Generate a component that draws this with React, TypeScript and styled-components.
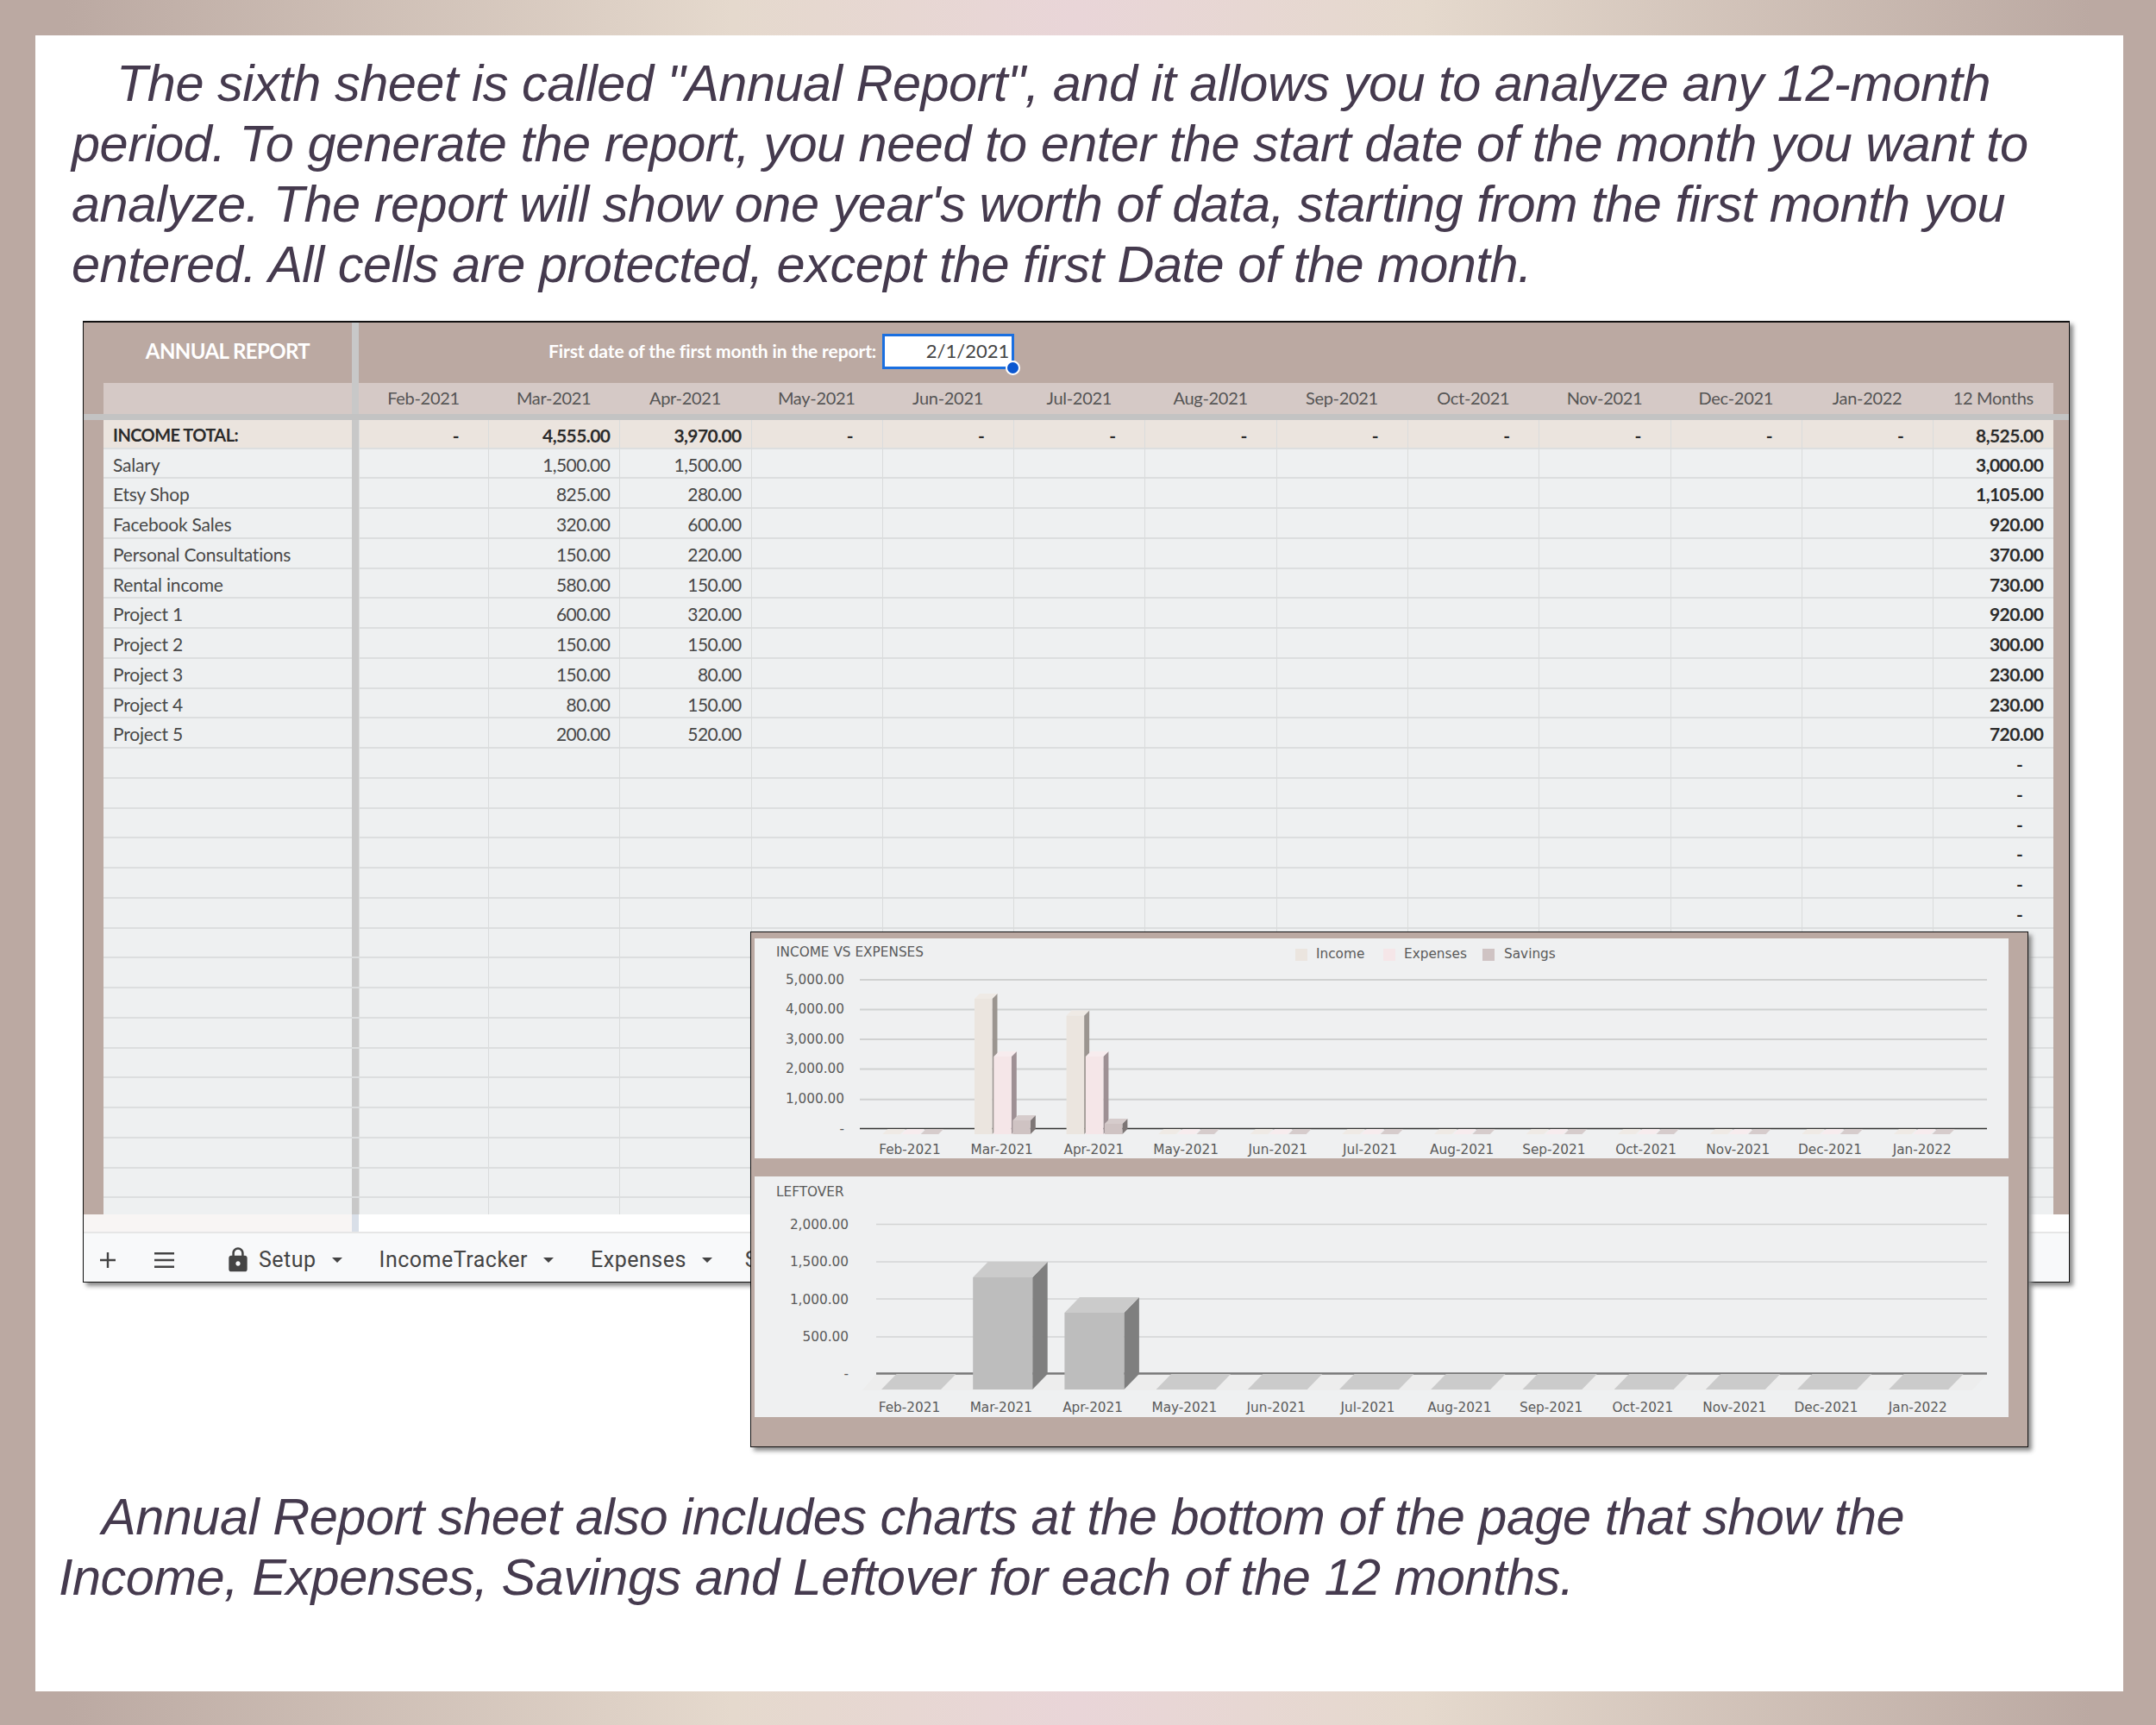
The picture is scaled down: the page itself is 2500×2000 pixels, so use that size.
import React from 'react'
import styled, { createGlobalStyle } from 'styled-components'

const GlobalStyle = createGlobalStyle`
  html, body {
    margin: 0;
    padding: 0;
    background: #bba9a2;
  }
`

const ROSE = '#bba9a2'
const SHEET_FONT = '"Lato", "Liberation Sans", sans-serif'
const CHART_FONT = '"DejaVu Sans", "Liberation Sans", sans-serif'

const Page = styled.div`
  box-sizing: border-box;
  width: 2500px;
  height: 2000px;
  padding: 41px 38px 39px 41px;
  background-color: ${ROSE};
  background-image:
    linear-gradient(90deg, #bba9a2 3%, #e5d9cd 34%, #e9d5d8 50%, #e5d9cd 66%, #bba9a2 97%),
    linear-gradient(90deg, #bba9a2 3%, #e5d9cd 34%, #e9d5d8 50%, #e5d9cd 66%, #bba9a2 97%);
  background-size: 100% 41px, 100% 39px;
  background-position: top, bottom;
  background-repeat: no-repeat;
`

const Card = styled.div`
  box-sizing: border-box;
  height: 100%;
  background: #fff;
  padding-top: 21px;
`

const Paragraph = styled.p<{ $left: number; $indent: number }>`
  margin: 0 0 0 ${(p) => p.$left}px;
  font-family: "Liberation Sans", Arial, sans-serif;
  font-style: italic;
  font-size: 59.5px;
  line-height: 70px;
  letter-spacing: -0.5px;
  color: #453a4e;
  white-space: nowrap;
  text-indent: ${(p) => p.$indent}px;
`

const SheetArea = styled.div`
  position: relative;
  margin: 30px 0 46px 55px;
  height: 1306px;
`

const Sheet = styled.div`
  box-sizing: border-box;
  width: 2304px;
  height: 1115px;
  border: 1px solid #111;
  border-top-width: 2px;
  background: ${ROSE};
  box-shadow: 4px 4px 5px #8b8b8b;
  font-family: ${SHEET_FONT};
`

const Banner = styled.div`
  display: flex;
  height: 70px;
  padding-left: 23px;
`

const BannerTitle = styled.div`
  width: 288px;
  line-height: 66px;
  text-align: center;
  font-size: 24px;
  font-weight: 700;
  letter-spacing: -0.6px;
  color: #fff;
`

const ColumnRule = styled.div`
  width: 8px;
  background: #c8c8c8;
`

const BannerField = styled.div`
  display: flex;
  align-items: center;
  height: 66px;
  margin-left: 220px;
`

const BannerLabel = styled.div`
  font-size: 21px;
  font-weight: 700;
  letter-spacing: -0.1px;
  line-height: 64px;
  color: #fff;
  margin-right: 7px;
`

const DateCell = styled.div`
  position: relative;
  box-sizing: border-box;
  width: 153px;
  height: 41px;
  padding-right: 3px;
  border: 3px solid #1a6fe0;
  background: #fff;
  text-align: right;
  line-height: 34px;
  font-size: 22px;
  color: #454545;
`

const DragHandle = styled.span`
  position: absolute;
  right: -10px;
  bottom: -10px;
  width: 13px;
  height: 13px;
  border: 2px solid #fff;
  border-radius: 50%;
  background: #0b57d0;
`

const gridColumns = '288px 8px 150px repeat(11, 152.3px) 140px'

const HeaderRow = styled.div`
  display: grid;
  grid-template-columns: ${gridColumns};
  height: 36px;
  margin: 0 18px 0 23px;
  background: #d5c9c6;
`

const HeaderCell = styled.div`
  line-height: 35px;
  text-align: center;
  font-size: 20px;
  letter-spacing: -0.3px;
  color: #555;
`

const ThickRule = styled.div`
  height: 7px;
  background: #c3c3c3;
`

const Body = styled.div`
  margin: 0 18px 0 23px;
`

const Row = styled.div<{ $total?: boolean; $short?: boolean }>`
  display: grid;
  grid-template-columns: ${gridColumns};
  box-sizing: border-box;
  height: ${(p) => (p.$short ? '19px' : p.$total ? '33.5px' : '34.75px')};
  border-bottom: ${(p) => (p.$short ? 'none' : '2px solid #dcdedf')};
  background: ${(p) => (p.$total ? '#ebe4de' : '#eef0f1')};
`

const LabelCell = styled.div<{ $bold?: boolean }>`
  padding-left: 11px;
  line-height: 35px;
  font-size: ${(p) => (p.$bold ? 20 : 21)}px;
  letter-spacing: ${(p) => (p.$bold ? -0.55 : -0.2)}px;
  font-weight: ${(p) => (p.$bold ? 700 : 400)};
  color: ${(p) => (p.$bold ? '#2b2b2b' : '#484848')};
`

const Cell = styled.div<{ $bold?: boolean; $dash?: boolean }>`
  box-sizing: border-box;
  padding-right: ${(p) => (p.$dash ? '34px' : '11px')};
  border-left: 1px solid #dadcdc;
  text-align: right;
  line-height: 35px;
  font-size: 21px;
  letter-spacing: -0.6px;
  font-weight: ${(p) => (p.$bold ? 700 : 400)};
  color: ${(p) => (p.$bold ? '#2b2b2b' : '#484848')};

  &:last-child {
    padding-right: ${(p) => (p.$dash ? '36px' : '12px')};
  }
`

const BottomStrip = styled.div`
  display: flex;
  height: 20px;
  background: #fff;
`

const StripLabel = styled.div`
  width: 311px;
  background: #f8f5f4;
`

const StripRule = styled.div`
  width: 8px;
  background: #d9dfe8;
`

const TabBar = styled.div`
  display: flex;
  align-items: center;
  box-sizing: border-box;
  height: 58px;
  padding: 5px 0 0 19px;
  border-top: 2px solid #e6e6e6;
  background: #f8f9fa;
  font-family: Roboto, "Liberation Sans", sans-serif;
  font-size: 25px;
  letter-spacing: 0.5px;
  color: #444;
  overflow: hidden;
`

const BarIcon = styled.svg<{ $gap: number }>`
  flex: none;
  margin-right: ${(p) => p.$gap}px;
  fill: #444;
`

const Tab = styled.div<{ $gap?: number }>`
  display: flex;
  align-items: center;
  flex: none;
  margin-right: ${(p) => p.$gap ?? 43}px;
`

const Caret = styled.span`
  width: 0;
  height: 0;
  margin-left: 18px;
  border-left: 6px solid transparent;
  border-right: 6px solid transparent;
  border-top: 6px solid #444;
`

const ChartPanel = styled.div`
  position: absolute;
  left: 774px;
  top: 708px;
  box-sizing: border-box;
  width: 1482px;
  height: 598px;
  padding: 7px 22px 0 4px;
  border: 1px solid #111;
  background: ${ROSE};
  box-shadow: 4px 4px 5px #8b8b8b;
`

const ChartCard = styled.div<{ $h: number; $gap?: number }>`
  height: ${(p) => p.$h}px;
  margin-bottom: ${(p) => p.$gap ?? 0}px;
  background: #eff0f1;
`

const ChartSvg = styled.svg`
  display: block;
  font-family: ${CHART_FONT};
  font-size: 15.3px;
  fill: #5a5a5a;
`

const months = ['Feb-2021', 'Mar-2021', 'Apr-2021', 'May-2021', 'Jun-2021', 'Jul-2021', 'Aug-2021', 'Sep-2021', 'Oct-2021', 'Nov-2021', 'Dec-2021', 'Jan-2022']

const rows: [string, string, string, string][] = [
  ['Salary', '1,500.00', '1,500.00', '3,000.00'],
  ['Etsy Shop', '825.00', '280.00', '1,105.00'],
  ['Facebook Sales', '320.00', '600.00', '920.00'],
  ['Personal Consultations', '150.00', '220.00', '370.00'],
  ['Rental income', '580.00', '150.00', '730.00'],
  ['Project 1', '600.00', '320.00', '920.00'],
  ['Project 2', '150.00', '150.00', '300.00'],
  ['Project 3', '150.00', '80.00', '230.00'],
  ['Project 4', '80.00', '150.00', '230.00'],
  ['Project 5', '200.00', '520.00', '720.00'],
]

type BarColors = { front: string; top: string; side: string }

const incomeBar: BarColors = { front: '#ebe5df', top: '#efeae5', side: '#9b9590' }
const expenseBar: BarColors = { front: '#f5e6e8', top: '#f7ecee', side: '#9e9094' }
const savingsBar: BarColors = { front: '#cfc3c3', top: '#d6cccc', side: '#7d7676' }
const leftoverBar: BarColors = { front: '#bdbdbd', top: '#cbcbcb', side: '#7f7f7f' }

function Bar3D(props: { x: number; w: number; y: number; base: number; dx: number; dy: number; c: BarColors }) {
  const { x, w, y, base, dx, dy, c } = props
  return (
    <g>
      <polygon points={`${x + w},${y} ${x + w + dx},${y - dy} ${x + w + dx},${base - dy} ${x + w},${base}`} fill={c.side} />
      <polygon points={`${x},${y} ${x + w},${y} ${x + w + dx},${y - dy} ${x + dx},${y - dy}`} fill={c.top} />
      <rect x={x} y={y} width={w} height={base - y} fill={c.front} />
    </g>
  )
}

const incomeTops: Record<number, [number, number, number]> = {
  1: [1158, 1225, 1299],
  2: [1177.5, 1225, 1303],
}

function IncomeChart() {
  const gridY = [1136, 1170.6, 1205, 1239.6, 1274.7]
  const labels = ['5,000.00', '4,000.00', '3,000.00', '2,000.00', '1,000.00', '-']
  const labelY = [1136, 1170, 1205, 1239, 1274, 1309]
  return (
    <ChartSvg width={1454} height={255} viewBox="875 1088 1454 255">
      <text x={900} y={1109}>INCOME VS EXPENSES</text>
      <rect x={1502} y={1100} width={14} height={14} fill={incomeBar.front} />
      <text x={1526} y={1111}>Income</text>
      <rect x={1604} y={1100} width={14} height={14} fill={expenseBar.front} />
      <text x={1628} y={1111}>Expenses</text>
      <rect x={1719} y={1100} width={14} height={14} fill={savingsBar.front} />
      <text x={1744} y={1111}>Savings</text>
      {labels.map((l, i) => (
        <text key={l} x={979} y={labelY[i] + 5} textAnchor="end">{l}</text>
      ))}
      {gridY.map((y) => (
        <line key={y} x1={997} x2={2304} y1={y} y2={y} stroke="#d0d1d1" strokeWidth={2} />
      ))}
      <line x1={997} x2={2304} y1={1308.5} y2={1308.5} stroke="#333" strokeWidth={1.5} />
      {months.map((m, i) => {
        const left = 1023.4 + i * 106.6
        const tops = incomeTops[i] ?? [1315, 1315, 1315]
        return (
          <g key={m}>
            <Bar3D x={left} w={20.5} y={tops[0]} base={1315} dx={6} dy={6} c={incomeBar} />
            <Bar3D x={left + 22.3} w={20.5} y={tops[1]} base={1315} dx={6} dy={6} c={expenseBar} />
            <Bar3D x={left + 44.3} w={20.5} y={tops[2]} base={1315} dx={6} dy={6} c={savingsBar} />
            <text x={1055 + i * 106.7} y={1338} textAnchor="middle">{m}</text>
          </g>
        )
      })}
    </ChartSvg>
  )
}

const leftoverTops: Record<number, number> = { 1: 1481, 2: 1522 }

function LeftoverChart() {
  const labels = ['2,000.00', '1,500.00', '1,000.00', '500.00', '-']
  const gridY = [1419.6, 1463, 1506, 1550]
  return (
    <ChartSvg width={1454} height={279} viewBox="875 1364 1454 279">
      <text x={900} y={1387}>LEFTOVER</text>
      {labels.map((l, i) => (
        <text key={l} x={984} y={1425 + i * 43.3} textAnchor="end">{l}</text>
      ))}
      {gridY.map((y) => (
        <line key={y} x1={1016} x2={2304} y1={y} y2={y} stroke="#d3d4d4" strokeWidth={1.5} />
      ))}
      <polygon points="1016,1593 2304,1593 2287,1612 1000,1612" fill="#ededed" />
      <line x1={1016} x2={2304} y1={1592.6} y2={1592.6} stroke="#777" strokeWidth={2.5} />
      {months.map((m, i) => (
        <g key={m}>
          <Bar3D x={1022 + i * 106.2} w={69} y={leftoverTops[i] ?? 1611} base={1611} dx={17.5} dy={18} c={leftoverBar} />
          <text x={1054.5 + i * 106.3} y={1636.5} textAnchor="middle">{m}</text>
        </g>
      ))}
    </ChartSvg>
  )
}

function LockIcon() {
  return (
    <BarIcon $gap={8} width={32} height={32} viewBox="0 0 24 24">
      <path d="M18 8h-1V6c0-2.76-2.24-5-5-5S7 3.24 7 6v2H6c-1.1 0-2 .9-2 2v10c0 1.1.9 2 2 2h12c1.1 0 2-.9 2-2V10c0-1.1-.9-2-2-2zm-6 9c-1.1 0-2-.9-2-2s.9-2 2-2 2 .9 2 2-.9 2-2 2zm3.1-9H8.9V6c0-1.71 1.39-3.1 3.1-3.1 1.71 0 3.1 1.39 3.1 3.1v2z" />
    </BarIcon>
  )
}

export default function App(): React.ReactElement {
  return (
    <Page>
      <GlobalStyle />
      <Card>
        <Paragraph $left={42} $indent={52}>
          The sixth sheet is called "Annual Report", and it allows you to analyze any 12-month<br />
          period. To generate the report, you need to enter the start date of the month you want to<br />
          analyze. The report will show one year's worth of data, starting from the first month you<br />
          entered. All cells are protected, except the first Date of the month.
        </Paragraph>

        <SheetArea>
          <Sheet>
            <Banner>
              <BannerTitle>ANNUAL REPORT</BannerTitle>
              <ColumnRule />
              <BannerField>
                <BannerLabel>First date of the first month in the report:</BannerLabel>
                <DateCell>
                  2/1/2021
                  <DragHandle />
                </DateCell>
              </BannerField>
            </Banner>
            <HeaderRow>
              <div />
              <ColumnRule />
              {months.map((m) => <HeaderCell key={m}>{m}</HeaderCell>)}
              <HeaderCell>12 Months</HeaderCell>
            </HeaderRow>
            <ThickRule />
            <Body>
              <Row $total>
                <LabelCell $bold>INCOME TOTAL:</LabelCell>
                <ColumnRule />
                {months.map((m, i) => (
                  i === 1 ? <Cell key={m} $bold>4,555.00</Cell>
                  : i === 2 ? <Cell key={m} $bold>3,970.00</Cell>
                  : <Cell key={m} $bold $dash>-</Cell>
                ))}
                <Cell $bold>8,525.00</Cell>
              </Row>
              {rows.map((r) => (
                <Row key={r[0]}>
                  <LabelCell>{r[0]}</LabelCell>
                  <ColumnRule />
                  {months.map((m, i) => (
                    <Cell key={m}>{i === 1 ? r[1] : i === 2 ? r[2] : ''}</Cell>
                  ))}
                  <Cell $bold>{r[3]}</Cell>
                </Row>
              ))}
              {Array.from({ length: 16 }).map((_, n) => (
                <Row key={n} $short={n === 15}>
                  <LabelCell />
                  <ColumnRule />
                  {months.map((m) => <Cell key={m} />)}
                  {n < 6 ? <Cell $bold $dash>-</Cell> : <Cell />}
                </Row>
              ))}
            </Body>
            <BottomStrip>
              <StripLabel />
              <StripRule />
            </BottomStrip>
            <TabBar>
              <BarIcon $gap={45} width={18} height={18} viewBox="0 0 18 18">
                <path d="M7.8 0h2.4v7.8H18v2.4h-7.8V18H7.8v-7.8H0V7.8h7.8z" />
              </BarIcon>
              <BarIcon $gap={58} width={23} height={18} viewBox="0 0 23 18">
                <path d="M0 0h23v2.4H0zM0 7.8h23v2.4H0zM0 15.6h23V18H0z" />
              </BarIcon>
              <Tab>
                <LockIcon />
                Setup
                <Caret />
              </Tab>
              <Tab>IncomeTracker<Caret /></Tab>
              <Tab $gap={38}>Expenses<Caret /></Tab>
              <Tab>S</Tab>
            </TabBar>
          </Sheet>

          <ChartPanel>
            <ChartCard $h={255} $gap={21}>
              <IncomeChart />
            </ChartCard>
            <ChartCard $h={279}>
              <LeftoverChart />
            </ChartCard>
          </ChartPanel>
        </SheetArea>

        <Paragraph $left={27} $indent={50}>
          Annual Report sheet also includes charts at the bottom of the page that show the<br />
          Income, Expenses, Savings and Leftover for each of the 12 months.
        </Paragraph>
      </Card>
    </Page>
  )
}
